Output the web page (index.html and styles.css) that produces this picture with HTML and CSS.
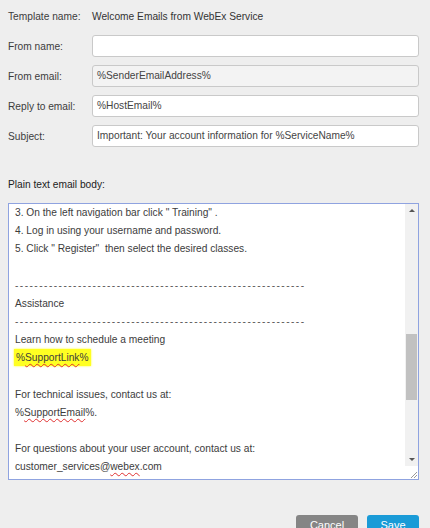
FILE: index.html
```html
<!DOCTYPE html>
<html lang="en">
<head>
    <meta charset="UTF-8">
    <title>Email Template</title>
    <link rel="stylesheet" href="styles.css">
</head>
<body>
    <div class="form">
        <div class="row">
            <span class="label">Template name:</span>
            <span class="value">Welcome Emails from WebEx Service</span>
        </div>
        <div class="row">
            <span class="label">From name:</span>
            <div class="field"></div>
        </div>
        <div class="row">
            <span class="label">From email:</span>
            <div class="field readonly">%SenderEmailAddress%</div>
        </div>
        <div class="row">
            <span class="label">Reply to email:</span>
            <div class="field">%HostEmail%</div>
        </div>
        <div class="row">
            <span class="label">Subject:</span>
            <div class="field">Important: Your account information for %ServiceName%</div>
        </div>
    </div>

    <div class="body-label">Plain text email body:</div>

    <div class="textbox">
        <div class="lines">
            <div>3. On the left navigation bar click " Training" .</div>
            <div>4. Log in using your username and password.</div>
            <div>5. Click " Register"&nbsp; then select the desired classes.</div>
            <div>&nbsp;</div>
            <div class="dash">------------------------------------------------------------</div>
            <div>Assistance</div>
            <div class="dash">------------------------------------------------------------</div>
            <div>Learn how to schedule a meeting</div>
            <div><span class="mark">%<span class="typo">SupportLink</span>%</span></div>
            <div>&nbsp;</div>
            <div>For technical issues, contact us at:</div>
            <div>%<span class="typo">SupportEmail</span>%.</div>
            <div>&nbsp;</div>
            <div>For questions about your user account, contact us at:</div>
            <div>customer_services@<span class="typo">webex</span>.com</div>
        </div>
        <div class="scrollbar">
            <div class="arrow up"></div>
            <div class="track"><div class="thumb"></div></div>
            <div class="arrow down"></div>
            <div class="grip">
                <svg width="9" height="9" viewBox="0 0 9 9">
                    <path d="M8 2 L2 8 M8 5 L5 8" stroke="#9a9a9a" stroke-width="1"/>
                </svg>
            </div>
        </div>
    </div>

    <div class="actions">
        <button class="btn cancel">Cancel</button>
        <button class="btn save">Save</button>
    </div>
</body>
</html>
```

FILE: styles.css
```css
* {
    box-sizing: border-box;
    margin: 0;
    padding: 0;
}

body {
    font-family: 'Liberation Sans', Arial, sans-serif;
    font-size: 10.2px;
    color: #3c3c3c;
    background: #eeeeee;
    padding: 5px 11px 0 8px;
    height: 528px;
    overflow: hidden;
}

.form {
    display: flex;
    flex-direction: column;
    gap: 8px;
}

.row {
    display: flex;
    align-items: center;
    height: 22px;
    white-space: nowrap;
}

.label {
    width: 84px;
    flex-shrink: 0;
}

.value {
    color: #333;
}

.field {
    flex: 1;
    height: 22px;
    background: #fff;
    border: 1px solid #c9c9c9;
    border-radius: 3px;
    padding: 0 4px;
    line-height: 20px;
    color: #444;
}

.field.readonly {
    background: #f3f3f3;
}

.body-label {
    margin-top: 30px;
    height: 16px;
    line-height: 16px;
    color: #222;
}

.textbox {
    margin-top: 10px;
    height: 277px;
    background: #fff;
    border: 1px solid #8fa3e0;
    display: flex;
    overflow: hidden;
}

.lines {
    flex: 1;
    padding: 0 6px;
    line-height: 18.15px;
    color: #3c3c3c;
    white-space: nowrap;
    overflow: hidden;
}

.dash {
    color: #555;
    letter-spacing: 1.45px;
}

.mark {
    background: #ffff22;
    padding: 3px 2px;
    margin-left: -1px;
    box-shadow: 0 0 2px #ffff22;
}

.typo {
    text-decoration: underline wavy #e03030;
    text-decoration-thickness: 1px;
    text-underline-offset: 2px;
}

.scrollbar {
    width: 13px;
    background: #f1f1f1;
    display: flex;
    flex-direction: column;
}

.arrow {
    height: 13px;
    display: flex;
    align-items: center;
    justify-content: center;
}

.arrow::after {
    content: '';
    border-left: 3px solid transparent;
    border-right: 3px solid transparent;
}

.arrow.up::after {
    border-bottom: 3px solid #555;
}

.arrow.down::after {
    border-top: 3px solid #555;
}

.track {
    flex: 1;
    padding-top: 117px;
}

.thumb {
    height: 66px;
    background: #c1c1c1;
    margin: 0 1px;
}

.grip {
    height: 13px;
    background: #fff;
    display: flex;
    align-items: flex-end;
    justify-content: flex-end;
}

.actions {
    margin-top: 35px;
    display: flex;
    justify-content: flex-end;
    gap: 9px;
}

.btn {
    font-family: 'Liberation Sans', Arial, sans-serif;
    font-size: 11px;
    color: #fff;
    border: none;
    border-radius: 3px;
    height: 26px;
    line-height: 20px;
    padding-bottom: 6px;
}

.cancel {
    width: 62px;
    background: #858585;
}

.save {
    width: 52px;
    background: #1a9bd7;
}
```
